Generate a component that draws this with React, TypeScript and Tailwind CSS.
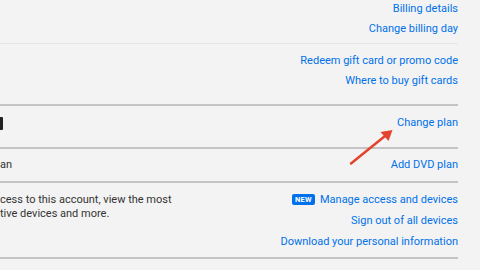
import React from 'react'

function Link({ children }: { children: React.ReactNode }) {
  return (
    <a href="#" className="text-[#0071eb] whitespace-nowrap hover:underline">
      {children}
    </a>
  )
}

export default function App() {
  return (
    <div className="relative w-[480px] h-[270px] overflow-hidden bg-[#f3f3f3] font-['Roboto',sans-serif] text-[11px] text-[#333]">
      <div className="w-[458px]">
        {/* billing */}
        <div className="-mt-px flex flex-col items-end">
          <div className="h-[20px] leading-[20px]"><Link>Billing details</Link></div>
          <div className="h-[20px] leading-[20px]"><Link>Change billing day</Link></div>
        </div>
        <div className="mt-[4px] h-px bg-[#e6e6e6]" />

        {/* gift cards */}
        <div className="pt-[7px] pb-[13px] flex flex-col items-end">
          <div className="h-[20px] leading-[20px]"><Link>Redeem gift card or promo code</Link></div>
          <div className="h-[20px] leading-[20px]"><Link>Where to buy gift cards</Link></div>
        </div>
        <div className="h-[2px] bg-[#c4c4c4]" />

        {/* plan */}
        <div className="h-[41px] pt-[7px] flex justify-between items-start">
          {/* tail of the plan name, cut off by the viewport */}
          <div className="mt-[4px] w-[3px] h-[13px] bg-[#222] rounded-r-[1px]" />
          <div className="h-[20px] leading-[20px]"><Link>Change plan</Link></div>
        </div>
        <div className="h-[2px] bg-[#c4c4c4]" />

        {/* dvd */}
        <div className="h-[32px] pt-[6px] flex justify-between items-start">
          <span className="leading-[20px]">an</span>
          <div className="h-[20px] leading-[20px]"><Link>Add DVD plan</Link></div>
        </div>
        <div className="h-[2px] bg-[#c4c4c4]" />

        {/* security */}
        <div className="pt-[6px] pb-[5px] flex justify-between items-start">
          <div className="mt-[4px] leading-[14px]">
            <p>cess to this account, view the most</p>
            <p>tive devices and more.</p>
          </div>
          <div className="flex flex-col items-end">
            <div className="h-[21px] leading-[21px] flex items-center gap-[5px]">
              <span className="h-[11px] px-[3px] flex items-center rounded-[2px] bg-[#0071eb] text-white font-bold text-[7.5px] tracking-[0.3px]">
                NEW
              </span>
              <Link>Manage access and devices</Link>
            </div>
            <div className="h-[21px] leading-[21px]"><Link>Sign out of all devices</Link></div>
            <div className="h-[21px] leading-[21px]"><Link>Download your personal information</Link></div>
          </div>
        </div>
        <div className="h-[2px] bg-[#c4c4c4]" />
      </div>

      <svg className="absolute inset-0 pointer-events-none" width="480" height="270" viewBox="0 0 480 270">
        <line x1="351" y1="163.5" x2="385" y2="136" stroke="#e4432d" strokeWidth="2.5" strokeLinecap="round" />
        <polygon points="392.5,130 388.5,141 380.5,132" fill="#e4432d" />
      </svg>
    </div>
  )
}
